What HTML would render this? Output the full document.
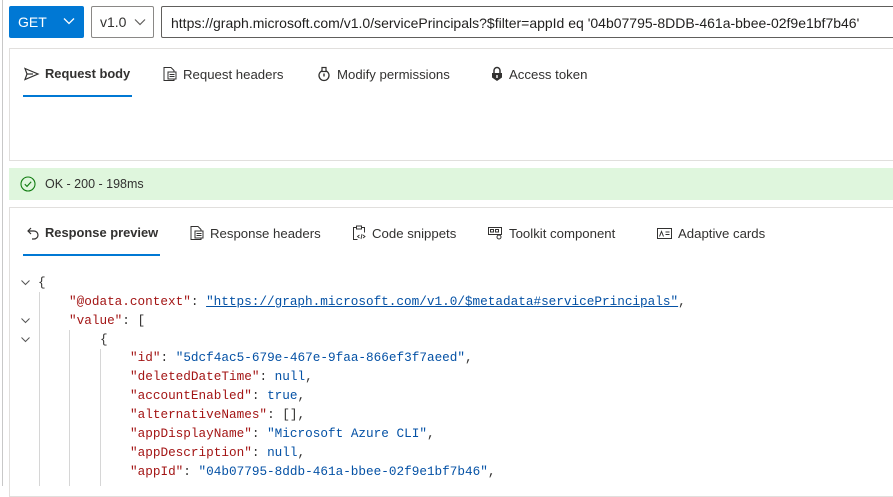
<!DOCTYPE html>
<html><head><meta charset="utf-8"><style>
*{margin:0;padding:0;box-sizing:border-box}
body{width:893px;height:486px;overflow:hidden;background:#fff;font-family:"Liberation Sans",sans-serif;font-size:14px;color:#323130;position:relative}
.abs{position:absolute}
.tab{position:absolute;top:0;white-space:nowrap;display:flex;align-items:center;gap:5px;font-size:13.2px;color:#323130}
.mono{font-family:"Liberation Mono",monospace;font-size:12.7px;position:absolute;white-space:pre;line-height:19px}
.k{color:#a31515}.s{color:#0451a5}
.g{position:absolute;width:1px;background:#d6d6d6}
.chev{position:absolute;left:21px;width:9px;height:9px}
</style></head><body>
<div class="abs" style="left:2px;top:0;width:1px;height:486px;background:#c8c8c8"></div>

<div class="abs" style="left:9px;top:6px;width:75px;height:32px;background:#0078d4;border-radius:2px;color:#fff;font-size:14px">
<span class="abs" style="left:9px;top:8px">GET</span>
<svg class="abs" style="left:54px;top:11px" width="12" height="8" viewBox="0 0 12 8"><path d="M1 1.5l5 5 5-5" stroke="#fff" stroke-width="1.3" fill="none"/></svg></div>
<div class="abs" style="left:91px;top:6px;width:63px;height:32px;border:1px solid #8a8886;border-radius:2px">
<span class="abs" style="left:8px;top:7px">v1.0</span>
<svg class="abs" style="left:42px;top:11px" width="12" height="8" viewBox="0 0 12 8"><path d="M1 1.5l5 5 5-5" stroke="#605e5c" stroke-width="1.2" fill="none"/></svg></div>
<div class="abs" style="left:161px;top:6px;width:740px;height:32px;border:1px solid #605e5c;border-radius:2px">
<span class="abs" style="left:9px;top:8px;white-space:nowrap;color:#201f1e">https://graph.microsoft.com/v1.0/servicePrincipals?$filter=appId eq '04b07795-8DDB-461a-bbee-02f9e1bf7b46'</span></div>

<div class="abs" style="left:9px;top:48px;width:900px;height:113px;border:1px solid #e1dfdd;border-right:none"></div>
<div class="abs" style="left:0;top:66px;width:893px;height:20px">
<div class="tab" style="left:23px;font-weight:bold;font-size:12.9px"><svg width="17" height="14" viewBox="0 0 17 14"><path d="M2 1.5L15 7 2 12.5 4 7z" stroke="#323130" stroke-width="1.2" fill="none"/><path d="M4 7h6" stroke="#323130" stroke-width="1.2"/></svg>Request body</div>
<div class="tab" style="left:162px"><svg width="16" height="16" viewBox="0 0 16 16"><path d="M2 1.5h7l3 3v10H2z" stroke="#323130" fill="none"/><rect x="6" y="6" width="8" height="7" stroke="#323130" fill="#fff"/><path d="M7.5 8.5h5M7.5 10.5h5" stroke="#323130"/></svg>Request headers</div>
<div class="tab" style="left:316px"><svg width="16" height="16" viewBox="0 0 16 16"><circle cx="8" cy="9.5" r="5" stroke="#323130" stroke-width="1.3" fill="none"/><rect x="6" y="1.5" width="4" height="4" stroke="#323130" stroke-width="1.2" fill="#fff"/><path d="M8 7.5v3" stroke="#323130" stroke-width="1.4"/></svg>Modify permissions</div>
<div class="tab" style="left:490px"><svg width="14" height="16" viewBox="0 0 14 16"><path d="M4 7V4.5a3 3 0 016 0V7" stroke="#323130" stroke-width="1.5" fill="none"/><path d="M2 7h10v4.5L7 15 2 11.5z" fill="#323130"/><path d="M7 9v3" stroke="#fff" stroke-width="1.4"/></svg>Access token</div>
</div>
<div class="abs" style="left:23px;top:95px;width:109px;height:2px;background:#0078d4"></div>

<div class="abs" style="left:9px;top:168px;width:890px;height:32px;background:#dff6dd">
<svg class="abs" style="left:11px;top:8px" width="16" height="16" viewBox="0 0 16 16"><circle cx="8" cy="8" r="7" stroke="#107c10" stroke-width="1.1" fill="none"/><path d="M4.8 8.2l2.2 2.2 4.2-4.6" stroke="#107c10" stroke-width="1.1" fill="none"/></svg>
<span class="abs" style="left:36px;top:9px;font-size:12.5px;color:#323130">OK - 200 - 198ms</span></div>

<div class="abs" style="left:9px;top:207px;width:900px;height:290px;border:1px solid #e1dfdd;border-right:none"></div>
<div class="abs" style="left:0;top:225px;width:893px;height:20px">
<div class="tab" style="left:26px;font-weight:bold;font-size:12.9px"><svg width="14" height="14" viewBox="0 0 14 14"><path d="M5 2L2 5l3 3" stroke="#323130" stroke-width="1.2" fill="none"/><path d="M2 5h6a4 4 0 010 8H6" stroke="#323130" stroke-width="1.2" fill="none"/></svg>Response preview</div>
<div class="tab" style="left:189px"><svg width="16" height="16" viewBox="0 0 16 16"><path d="M2 1.5h7l3 3v10H2z" stroke="#323130" fill="none"/><rect x="6" y="6" width="8" height="7" stroke="#323130" fill="#fff"/><path d="M7.5 8.5h5M7.5 10.5h5" stroke="#323130"/></svg>Response headers</div>
<div class="tab" style="left:351px"><svg width="16" height="16" viewBox="0 0 16 16"><path d="M5 2.5H2.5v12h4M11 2.5h2.5v5" stroke="#323130" fill="none"/><rect x="5.5" y="1" width="5" height="3" stroke="#323130" fill="#fff"/><path d="M8.5 10l-2 1.5 2 1.5M11 9l-1 5M12 10l2 1.5-2 1.5" stroke="#323130" stroke-width=".9" fill="none"/></svg>Code snippets</div>
<div class="tab" style="left:487px"><svg width="17" height="16" viewBox="0 0 17 16"><rect x="1.5" y="2.5" width="13" height="7" stroke="#323130" fill="none"/><rect x="3.5" y="4.5" width="3" height="2.5" stroke="#323130" fill="none"/><rect x="8.5" y="4.5" width="3" height="2.5" stroke="#323130" fill="none"/><circle cx="12" cy="12" r="2" stroke="#323130" fill="#fff"/></svg>Toolkit component</div>
<div class="tab" style="left:656px"><svg width="17" height="16" viewBox="0 0 17 16"><rect x="1.5" y="3.5" width="14" height="10" stroke="#323130" fill="none"/><path d="M3.5 11.5l2-5 2 5M9.5 7h4M9.5 9.5h4" stroke="#323130" fill="none"/></svg>Adaptive cards</div>
</div>
<div class="abs" style="left:23px;top:254px;width:137px;height:2px;background:#0078d4"></div>

<svg class="chev" style="top:278px" viewBox="0 0 9 9"><path d="M.5 2.5l4 4 4-4" stroke="#555" fill="none"/></svg>
<svg class="chev" style="top:316px" viewBox="0 0 9 9"><path d="M.5 2.5l4 4 4-4" stroke="#555" fill="none"/></svg>
<svg class="chev" style="top:335px" viewBox="0 0 9 9"><path d="M.5 2.5l4 4 4-4" stroke="#555" fill="none"/></svg>
<div class="g" style="left:39px;top:292px;height:194px"></div>
<div class="g" style="left:69px;top:330px;height:156px"></div>
<div class="g" style="left:100px;top:349px;height:137px"></div>

<div class="mono" style="left:38px;top:273px">{</div>
<div class="mono" style="left:69px;top:292px"><span class="k">"@odata.context"</span>: <span class="s" style="text-decoration:underline">"https://graph.microsoft.com/v1.0/$metadata#servicePrincipals"</span>,</div>
<div class="mono" style="left:69px;top:311px"><span class="k">"value"</span>: [</div>
<div class="mono" style="left:100px;top:330px">{</div>
<div class="mono" style="left:130px;top:348px"><span class="k">"id"</span>: <span class="s">"5dcf4ac5-679e-467e-9faa-866ef3f7aeed"</span>,
<span class="k">"deletedDateTime"</span>: <span class="s">null</span>,
<span class="k">"accountEnabled"</span>: <span class="s">true</span>,
<span class="k">"alternativeNames"</span>: [],
<span class="k">"appDisplayName"</span>: <span class="s">"Microsoft Azure CLI"</span>,
<span class="k">"appDescription"</span>: <span class="s">null</span>,
<span class="k">"appId"</span>: <span class="s">"04b07795-8ddb-461a-bbee-02f9e1bf7b46"</span>,</div>
</body></html>
